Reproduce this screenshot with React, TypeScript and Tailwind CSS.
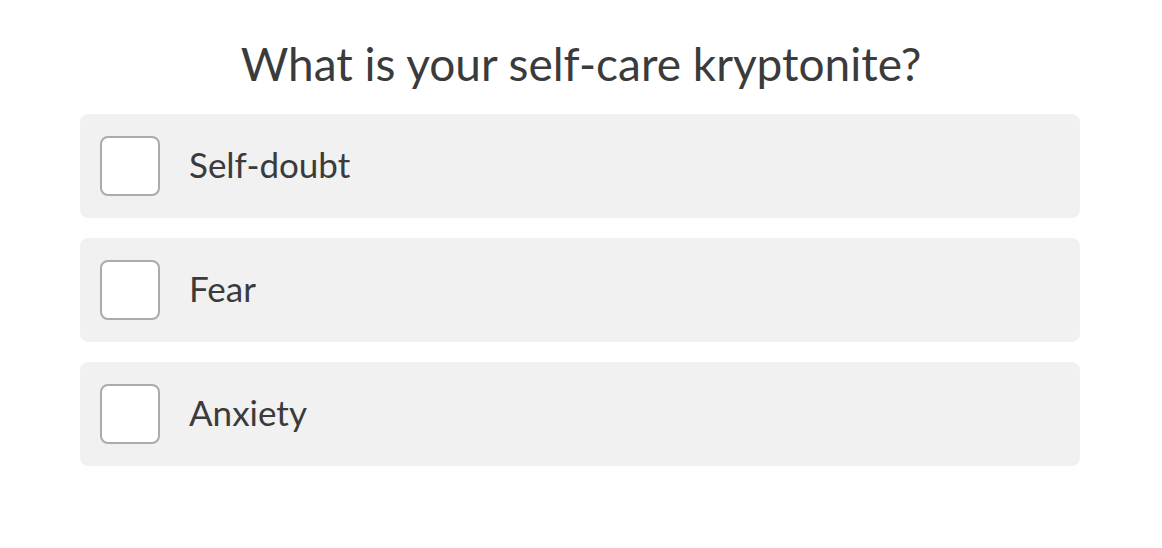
import React from 'react';

const OPTIONS = ['Self-doubt', 'Fear', 'Anxiety'];

const App: React.FC = () => {
  return (
    <div className="min-h-screen w-full bg-white pt-[34px] font-['Lato',sans-serif] text-[#3b3b3b]">
      <h1 className="text-center text-[46px] leading-[60px] font-normal">What is your self-care kryptonite?</h1>
      <div className="ml-[80px] mt-[20px] flex w-[1000px] flex-col gap-[20px]">
        {OPTIONS.map((opt) => (
          <label key={opt} className="flex h-[104px] items-center gap-[29px] rounded-[8px] bg-[#f1f1f1] px-[20px]">
            <span className="h-[60px] w-[60px] shrink-0 rounded-[8px] border-2 border-[#ababab] bg-white" />
            <span className="pb-[4px] text-[35px] leading-none">{opt}</span>
          </label>
        ))}
      </div>
    </div>
  );
};

export default App;
